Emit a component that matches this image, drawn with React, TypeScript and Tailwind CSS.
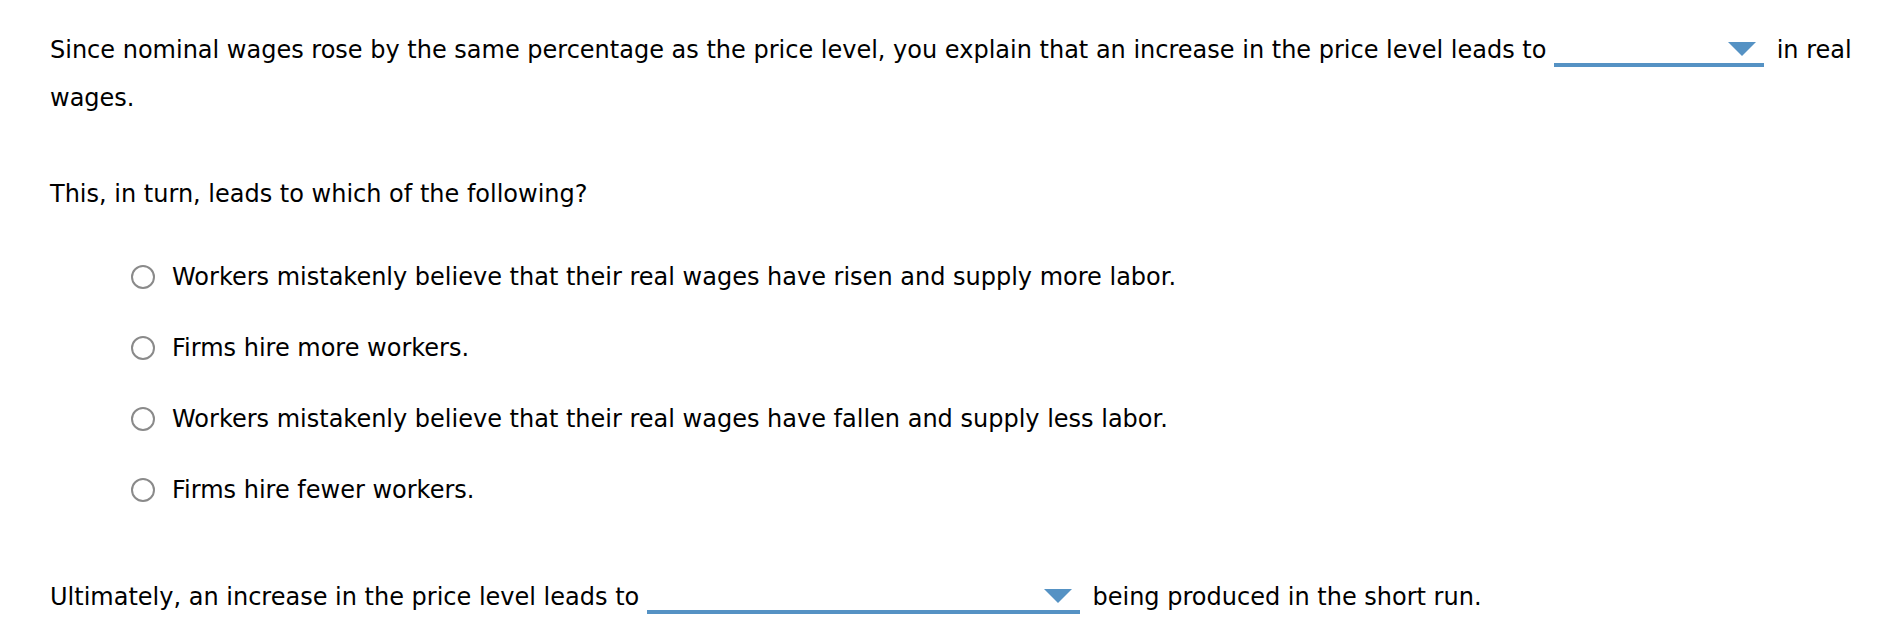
import React from 'react'

function Dropdown({ width }: { width: string }) {
  return (
    <span
      className={`relative inline-block h-[30px] border-b-[4px] border-[#5592c4] align-[-9px] mr-[5px] ${width}`}
    >
      <svg
        className="absolute right-[8px] top-[5px]"
        width="28"
        height="14"
        viewBox="0 0 28 14"
      >
        <polygon points="0,0 28,0 14,14" fill="#5592c4" />
      </svg>
    </span>
  )
}

const options = [
  'Workers mistakenly believe that their real wages have risen and supply more labor.',
  'Firms hire more workers.',
  'Workers mistakenly believe that their real wages have fallen and supply less labor.',
  'Firms hire fewer workers.'
]

export default function App() {
  return (
    <div
      className="min-h-[644px] bg-white pl-[50px] pr-[40px] pt-[26px] text-[24px] leading-[48px] text-black"
      style={{ fontFamily: '"DejaVu Sans", Verdana, sans-serif' }}
    >
      <p>
        Since nominal wages rose by the same percentage as the price level, you explain that an
        increase in the price level leads to <Dropdown width="w-[210px]" /> in real wages.
      </p>

      <p className="mt-[48px]">This, in turn, leads to which of the following?</p>

      <div className="mt-[35px] flex flex-col gap-[23px] pl-[81px]">
        {options.map((o) => (
          <label key={o} className="flex items-center gap-[17px]">
            <span className="inline-block h-[24px] w-[24px] shrink-0 rounded-full border-2 border-[#8a8a8a] bg-white" />
            <span>{o}</span>
          </label>
        ))}
      </div>

      <p className="mt-[59px]">
        Ultimately, an increase in the price level leads to <Dropdown width="w-[433px]" /> being
        produced in the short run.
      </p>
    </div>
  )
}
